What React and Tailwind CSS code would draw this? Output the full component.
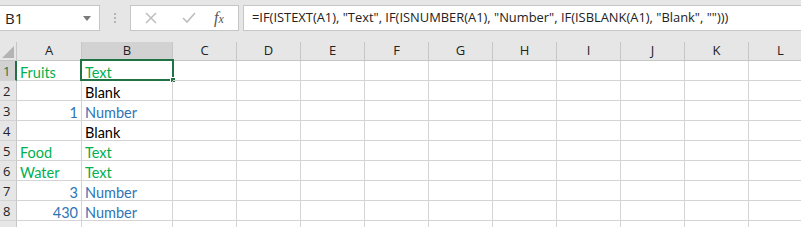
import React from "react";

const cols = [
    { name: "A", w: "w-[65px]" },
    { name: "B", w: "w-[91px]" },
    { name: "C", w: "w-[64px]" },
    { name: "D", w: "w-[64px]" },
    { name: "E", w: "w-[64px]" },
    { name: "F", w: "w-[64px]" },
    { name: "G", w: "w-[64px]" },
    { name: "H", w: "w-[64px]" },
    { name: "I", w: "w-[64px]" },
    { name: "J", w: "w-[64px]" },
    { name: "K", w: "w-[64px]" },
    { name: "L", w: "w-[64px]" },
];

const GREEN = "text-[#00b050]";
const BLUE = "text-[#2e75b6]";
const BLACK = "text-black";

// cell A text + classes, cell B text + classes
const rows = [
    { a: "Fruits", aCls: GREEN, b: "Text", bCls: GREEN },
    { a: "", aCls: "", b: "Blank", bCls: BLACK },
    { a: "1", aCls: `${BLUE} text-right`, b: "Number", bCls: BLUE },
    { a: "", aCls: "", b: "Blank", bCls: BLACK },
    { a: "Food", aCls: GREEN, b: "Text", bCls: GREEN },
    { a: "Water", aCls: GREEN, b: "Text", bCls: GREEN },
    { a: "3", aCls: `${BLUE} text-right`, b: "Number", bCls: BLUE },
    { a: "430", aCls: `${BLUE} text-right`, b: "Number", bCls: BLUE },
    { a: "", aCls: "", b: "", bCls: "" },
];

function Toolbar() {
    return (
        <div className="h-[42px] bg-[#e6e6e6] flex items-start pt-[5px]">
            {/* Name box */}
            <div className="w-[100px] h-[26px] bg-white border border-[#c6c6c6] border-l-0 flex items-center justify-between pl-[5px] pr-[8px]">
                <span className="text-[15px] text-[#222] font-['Open_Sans',sans-serif]">B1</span>
                <svg width="8" height="5" viewBox="0 0 8 5">
                    <path d="M0 0 L8 0 L4 5 Z" fill="#7a7a7a" />
                </svg>
            </div>
            {/* dots */}
            <div className="w-[30px] h-[26px] flex flex-col items-center justify-center gap-[2px]">
                <span className="w-[2px] h-[2px] bg-[#b5b5b5]" />
                <span className="w-[2px] h-[2px] bg-[#b5b5b5]" />
                <span className="w-[2px] h-[2px] bg-[#b5b5b5]" />
            </div>
            {/* cancel / enter / fx */}
            <div className="w-[109px] h-[26px] bg-white border border-[#c6c6c6] flex items-center pl-[14px]">
                <svg width="12" height="12" viewBox="0 0 12 12">
                    <path d="M1 1 L11 11 M11 1 L1 11" stroke="#bdbdbd" strokeWidth="1.5" />
                </svg>
                <svg width="14" height="12" viewBox="0 0 14 12" className="ml-[25px]">
                    <path d="M1 6 L5 10 L13 1" stroke="#bdbdbd" strokeWidth="1.6" fill="none" />
                </svg>
                <span className="ml-[18px] font-['Liberation_Serif',serif] italic text-[#555] text-[16px] leading-none">
                    f<span className="text-[12px]">x</span>
                </span>
            </div>
            {/* formula bar */}
            <div className="ml-[4px] flex-1 h-[26px] bg-white border border-[#c6c6c6] border-r-0 flex items-center pl-[8px]">
                <span className="text-[12.9px] text-[#222] font-['Open_Sans',sans-serif] whitespace-nowrap">
                    =IF(ISTEXT(A1), "Text", IF(ISNUMBER(A1), "Number", IF(ISBLANK(A1), "Blank", "")))
                </span>
            </div>
        </div>
    );
}

function HeaderRow() {
    return (
        <div className="flex h-[19px] bg-[#e6e6e6] border-b border-[#c6c6c6]">
            <div className="w-[17px] shrink-0 border-r border-[#c6c6c6] relative">
                <svg width="12" height="12" viewBox="0 0 12 12" className="absolute right-[2px] bottom-[2px]">
                    <path d="M12 0 L12 12 L0 12 Z" fill="#b4b4b4" />
                </svg>
            </div>
            {cols.map((c) => (
                <div
                    key={c.name}
                    className={`${c.w} shrink-0 border-r border-[#c6c6c6] flex items-center justify-center text-[13px] text-[#222] font-['Open_Sans',sans-serif] ${
                        c.name === "B" ? "bg-[#d2d2d2]" : ""
                    }`}
                >
                    {c.name}
                </div>
            ))}
        </div>
    );
}

function DataRow({ row, index }) {
    const selected = index === 0;
    const label = index < 8 ? index + 1 : "";
    return (
        <div className="flex h-[20px]">
            <div
                className={`w-[17px] h-[20px] shrink-0 border-b border-[#d4d4d4] pl-[3px] pt-[1px] text-[13px] leading-[19px] font-['Open_Sans',sans-serif] ${
                    selected
                        ? "bg-[#d2d2d2] text-[#217346] border-r-2 border-r-[#217346]"
                        : "bg-[#e6e6e6] text-[#222] border-r border-r-[#c6c6c6]"
                }`}
            >
                {label}
            </div>
            {cols.map((c) => {
                let text = "";
                let cls = "";
                if (c.name === "A") {
                    text = row.a;
                    cls = row.aCls;
                } else if (c.name === "B") {
                    text = row.b;
                    cls = row.bCls;
                }
                return (
                    <div
                        key={c.name}
                        className={`${c.w} h-[20px] shrink-0 border-r border-b border-[#d4d4d4] px-[3px] pt-[2px] text-[14.5px] leading-[19px] font-['Lato',sans-serif] whitespace-nowrap relative ${cls}`}
                    >
                        {text}
                        {selected && c.name === "B" && (
                            <div className="absolute -left-[2px] -top-[2px] w-[94px] h-[22px] border-2 border-[#217346] pointer-events-none">
                                <span className="absolute -right-[4px] -bottom-[4px] w-[6px] h-[6px] bg-[#217346] border border-white" />
                            </div>
                        )}
                    </div>
                );
            })}
        </div>
    );
}

export default function App() {
    return (
        <div className="w-[801px] h-[227px] overflow-hidden bg-white">
            <Toolbar />
            <HeaderRow />
            {rows.map((row, i) => (
                <DataRow key={i} row={row} index={i} />
            ))}
        </div>
    );
}
